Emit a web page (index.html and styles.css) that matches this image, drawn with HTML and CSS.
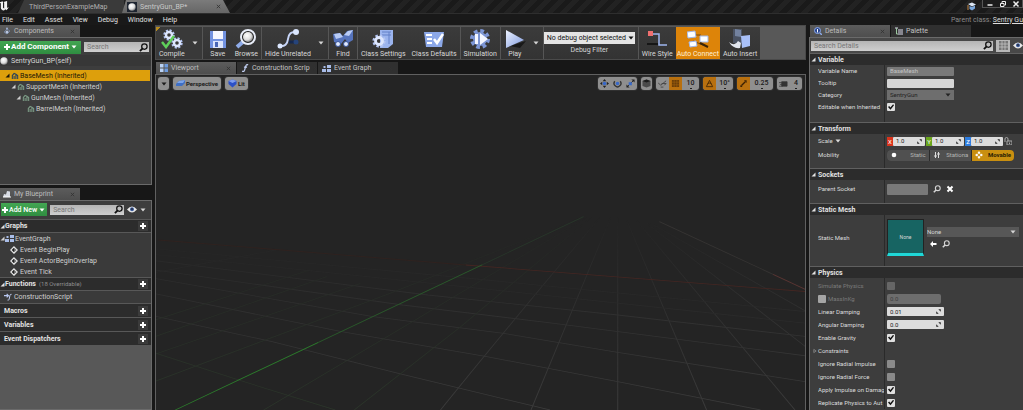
FILE: index.html
```html
<!DOCTYPE html>
<html lang="en">
<head>
<meta charset="utf-8">
<title>SentryGun_BP</title>
<link rel="stylesheet" href="styles.css">
</head>
<body>
<svg class="defs" aria-hidden="true">
  <defs>
    <linearGradient id="blue" x1="0" y1="0" x2="1" y2="1"><stop offset="0" stop-color="#eef3ff"/><stop offset="1" stop-color="#7f9be0"/></linearGradient>
    <radialGradient id="ball" cx=".4" cy=".35" r=".7"><stop offset="0" stop-color="#fff"/><stop offset=".6" stop-color="#ddd"/><stop offset="1" stop-color="#777"/></radialGradient>
    <symbol id="caret" viewBox="0 0 6 4"><path d="M.5.5h5L3 3.5z" fill="currentColor"/></symbol>
    <symbol id="open" viewBox="0 0 5 5"><path d="M4.5.5v4h-4z" fill="currentColor"/></symbol>
    <symbol id="plus" viewBox="0 0 8 8"><path d="M3 1h2v2h2v2H5v2H3V5H1V3h2z" fill="currentColor"/></symbol>
    <symbol id="close" viewBox="0 0 6 6"><path d="M1 1l4 4M5 1L1 5" stroke="currentColor" fill="none"/></symbol>
    <symbol id="lens" viewBox="0 0 10 10"><circle cx="6" cy="4" r="3" fill="none" stroke="currentColor" stroke-width="1.4"/><path d="M3.8 6.2L1 9" stroke="currentColor" stroke-width="2"/></symbol>
    <symbol id="eye" viewBox="0 0 12 8"><path d="M0 4Q6-3 12 4Q6 11 0 4z" fill="#e8e8e8"/><circle cx="6" cy="3.6" r="2.4" fill="#3d5c9c"/><circle cx="6" cy="3.4" r="1" fill="#111"/></symbol>
    <symbol id="sphere" viewBox="0 0 8 8"><circle cx="4" cy="4" r="3.7" fill="url(#ball)"/></symbol>
    <symbol id="mesh" viewBox="0 0 8 9"><path d="M1 8V4l2-2.500 2 1 2 1.500v4M3 8V4.500M5 8V3" fill="none" stroke="currentColor" stroke-width="1.200"/></symbol>
    <symbol id="event" viewBox="0 0 8 8"><path d="M4 .8L7.200 4 4 7.200.8 4z" fill="#222" stroke="#e4e4e4" stroke-width="1.200"/><path d="M4 .8L7.200 4 4 7.200z" fill="#e4e4e4" fill-opacity=".35"/></symbol>
    <symbol id="graph" viewBox="0 0 9 7"><path d="M0 4h4v3H0zM5 4h4v3H5zM5 0h4v3H5zM1.500 1h2v2h-2z" fill="#a9bde8"/></symbol>
    <symbol id="grid4" viewBox="0 0 8 8"><path d="M0 0h3.500v3.500H0zM0 4.500h3.500V8H0z" fill="#b9d2f5"/><path d="M4.500 0H8v3.500H4.500zM4.500 4.500H8V8H4.500z" fill="#6c9be0"/></symbol>
    <symbol id="fn" viewBox="0 0 8 9"><path d="M7.500 1Q5.500 0 4.800 2.500L3.500 7Q2.800 9 .8 8M2.800 3.500h3.500" fill="none" stroke="#c4d2f5" stroke-width="1.300"/></symbol>
    <symbol id="cscript" viewBox="0 0 9 9"><path d="M0 3h5M3 1l2 2-2 2" fill="none" stroke="#b9c8f0" stroke-width="1.300"/><path d="M8.500 1.500Q7 1 6.600 3L5.800 7Q5.400 8.500 4 8" fill="none" stroke="#c4d2f5" stroke-width="1.100"/></symbol>
    <symbol id="gear" viewBox="0 0 16 16"><circle cx="8" cy="8" r="6" fill="none" stroke="#b4c5f2" stroke-width="3.200" stroke-dasharray="2.700 2.012"/><circle cx="8" cy="8" r="4" fill="none" stroke="#dde6fd" stroke-width="3.200"/></symbol>
    <symbol id="spin" viewBox="0 0 6 6"><path d="M2.800.3h2.900v2.900zM.3 2.800v2.900h2.900z" fill="#222"/></symbol>
  </defs>
</svg>

<header class="titlebar">
  <svg class="logo" viewBox="0 0 12 12"><path d="M0 1.500Q2 .2 3.600.6V8L5 9V2L4 1.300 8.500 0V8.500L10.500 7Q9.800 9.700 7.500 11L6.500 10 4.800 11.500Q1 10.500 1 8V2.500L0 2.800z" fill="#f2f2f2"/></svg>
  <button class="doc"><span>ThirdPersonExampleMap</span></button>
  <button class="doc doc-on"><i class="tile"><svg><use href="#sphere"/></svg></i><span>SentryGun_BP*</span><svg class="x"><use href="#close"/></svg></button>
  <span class="spacer"></span>
  <svg class="cap" viewBox="0 0 9 9"><path d="M1 2l4-1.500L9 2.500 5 4.500z" fill="#dce7f5"/><path d="M2.500 4v3L5 8.500 8 6.500v-3L5 5z" fill="#79a7dd"/><path d="M1 3v5" stroke="#c58a4a"/></svg>
  <div class="wm">
    <button aria-label="Minimize"><svg viewBox="0 0 8 8"><path d="M1.500 5h5" stroke="#eee" stroke-width="1.500"/></svg></button>
    <button aria-label="Restore"><svg viewBox="0 0 8 8"><path d="M1.500 3.500h3.500v3H1.500zM3 3V1.500h3.500V5H5.500" stroke="#eee" fill="none"/></svg></button>
    <button aria-label="Close"><svg viewBox="0 0 8 8"><path d="M1.500 1.500l5 5M6.500 1.500l-5 5" stroke="#eee" stroke-width="1.500"/></svg></button>
  </div>
</header>

<nav class="menu">
  <button>File</button><button>Edit</button><button>Asset</button><button>View</button><button>Debug</button><button>Window</button><button>Help</button>
  <span class="parent">Parent class: <a href="#">Sentry Gu</a></span>
</nav>

<main>
  <div class="col left">
    <section class="dock comps">
      <div class="tabs"><button class="tab on"><svg class="i8" viewBox="0 0 8 8"><path d="M1 5l3-3 3 2-3 3z" fill="none" stroke="#6f7f9b"/><circle cx="4" cy="5" r="1.500" fill="#b9c6df"/><circle cx="4" cy="1.500" r="1" fill="#9fb0d2"/></svg><span>Components</span><svg class="x"><use href="#close"/></svg></button></div>
      <div class="panel">
        <div class="bar">
          <button class="green wide"><svg class="i8"><use href="#plus"/></svg>Add Component<svg class="car"><use href="#caret"/></svg></button>
          <label class="find"><input type="text" placeholder="Search" aria-label="Search components"><svg><use href="#lens"/></svg></label>
        </div>
        <div class="self"><svg class="i8"><use href="#sphere"/></svg>SentryGun_BP(self)</div>
        <ul class="tree">
          <li class="lv0 sel"><svg class="tw"><use href="#open"/></svg><svg class="i8 navy"><use href="#mesh"/></svg>BaseMesh (Inherited)</li>
          <li class="lv1"><svg class="tw"><use href="#open"/></svg><svg class="i8"><use href="#mesh"/></svg>SupportMesh (Inherited)</li>
          <li class="lv2"><svg class="tw"><use href="#open"/></svg><svg class="i8"><use href="#mesh"/></svg>GunMesh (Inherited)</li>
          <li class="lv3"><svg class="i8"><use href="#mesh"/></svg>BarrelMesh (Inherited)</li>
        </ul>
      </div>
    </section>
    <section class="dock myb">
      <div class="tabs"><button class="tab on"><svg class="i8" viewBox="0 0 8 8"><path d="M0 7l1-3 2 .5L4 1l3 .5V7z" fill="#d8dce4"/><path d="M0 7h8" stroke="#fff"/></svg><span>My Blueprint</span><svg class="x"><use href="#close"/></svg></button></div>
      <div class="panel">
        <div class="bar">
          <button class="green"><svg class="i8"><use href="#plus"/></svg>Add New<svg class="car"><use href="#caret"/></svg></button>
          <label class="find"><input type="text" placeholder="Search" aria-label="Search blueprint"><svg><use href="#lens"/></svg></label>
          <button class="view" aria-label="View options"><svg class="eye"><use href="#eye"/></svg><svg class="car"><use href="#caret"/></svg></button>
        </div>
        <h3><svg class="tw"><use href="#open"/></svg>Graphs<button aria-label="Add graph"><svg><use href="#plus"/></svg></button></h3>
        <ul class="list">
          <li><svg class="tw"><use href="#open"/></svg><svg class="gr"><use href="#graph"/></svg>EventGraph</li>
          <li class="ev"><svg class="i8"><use href="#event"/></svg>Event BeginPlay</li>
          <li class="ev"><svg class="i8"><use href="#event"/></svg>Event ActorBeginOverlap</li>
          <li class="ev"><svg class="i8"><use href="#event"/></svg>Event Tick</li>
        </ul>
        <h3><svg class="tw"><use href="#open"/></svg>Functions <small>(18 Overridable)</small><button aria-label="Add function"><svg><use href="#plus"/></svg></button></h3>
        <ul class="list"><li class="cs"><svg class="i8"><use href="#cscript"/></svg>ConstructionScript</li></ul>
        <h3 class="flat">Macros<button aria-label="Add macro"><svg><use href="#plus"/></svg></button></h3>
        <h3 class="flat">Variables<button aria-label="Add variable"><svg><use href="#plus"/></svg></button></h3>
        <h3 class="flat">Event Dispatchers<button aria-label="Add dispatcher"><svg><use href="#plus"/></svg></button></h3>
      </div>
    </section>
  </div>

  <div class="col center">
    <div class="toolbar">
      <div class="grp first">
        <button class="tool"><svg viewBox="0 0 22 20"><use href="#gear" x="2" y="0" width="12" height="12"/><use href="#gear" x="10" y="8" width="12" height="12"/><path d="M1 13l4 5 8-11" fill="none" stroke="#5fd05a" stroke-width="2.500"/></svg>Compile</button>
        <button class="drop" aria-label="Compile options"><svg class="car"><use href="#caret"/></svg></button>
      </div>
      <div class="grp save">
        <button class="tool"><svg viewBox="0 0 20 20"><path d="M2 2h16v17H2z" fill="#7292e0"/><path d="M5 2h10v8H5z" fill="#f5f7ff"/><path d="M5 12h10v7H5z" fill="#dbe4fb"/><path d="M7 13h3v5H7z" fill="#4866b5"/></svg>Save</button>
        <button class="tool"><svg viewBox="0 0 22 20"><path d="M9 12l-7 6" stroke="#8eabe8" stroke-width="4"/><circle cx="13" cy="8" r="7" fill="#222" stroke="#e8edf8" stroke-width="2"/><circle cx="13" cy="8" r="5" fill="url(#ball)"/></svg>Browse</button>
      </div>
      <div class="grp">
        <button class="tool"><svg viewBox="0 0 22 20"><path d="M3 17q7 1 8-7t8-7" fill="none" stroke="#c7d5f8" stroke-width="2"/><path d="M12 13h7" stroke="#16284e" stroke-width="3"/><g fill="#dbe7ff"><circle cx="3" cy="17" r="2.500"/><circle cx="19" cy="3" r="3"/></g><circle cx="19" cy="13" r="2.500" fill="#26447a"/></svg>Hide Unrelated</button>
        <button class="drop" aria-label="Hide options"><svg class="car"><use href="#caret"/></svg></button>
      </div>
      <div class="grp">
        <button class="tool"><svg viewBox="0 0 22 20"><path d="M1 5l7-1 3 3 4-5 6-1v10l-5 3-3-4-4 5-7-2z" fill="#5674bd"/><path d="M2 5l6-1 3 4-7 2zM12 6l4-4 5-1-4 6z" fill="#b8cbf5"/><circle cx="6" cy="15" r="2.500" fill="#dfe8fc" stroke="#37549b"/><circle cx="14" cy="15" r="2.500" fill="#dfe8fc" stroke="#37549b"/></svg>Find</button>
      </div>
      <div class="grp">
        <button class="tool"><svg viewBox="0 0 22 20"><path d="M8 1h13v14l-5 4H8z" fill="#9bb4ee"/><path d="M10 3h9M10 6h9M17 3v12" stroke="#6280c8"/><use href="#gear" x="0" y="5" width="14" height="14"/></svg>Class Settings</button>
        <button class="tool"><svg viewBox="0 0 22 20"><path d="M1 3h20l-2 15H3z" fill="#8ca8e8"/><path d="M3 6h6M4 10h5M4 14h5" stroke="#fff" stroke-width="2"/><path d="M11 10l3 4 6-9" fill="none" stroke="#fff" stroke-width="2.500"/></svg>Class Defaults</button>
      </div>
      <div class="grp">
        <button class="tool"><svg viewBox="0 0 22 20"><circle cx="11" cy="10" r="8" fill="none" stroke="#7d97d6" stroke-width="4" stroke-dasharray="3.600 2.683"/><circle cx="11" cy="10" r="7" fill="#7b94d2"/><path d="M6 5h3v10H6zM11 4l8 6-8 6z" fill="#f3f6ff"/></svg>Simulation</button>
      </div>
      <div class="grp">
        <button class="tool"><svg viewBox="0 0 22 20"><path d="M6 17l16-5-6 7z" fill="#191919"/><path d="M2 1l18 10L2 19z" fill="url(#blue)"/></svg>Play</button>
        <button class="drop" aria-label="Play options"><svg class="car"><use href="#caret"/></svg></button>
      </div>
      <div class="debug">
        <span class="pick"><select id="dbg"><option>No debug object selected</option></select><svg class="car"><use href="#caret"/></svg></span>
        <label for="dbg">Debug Filter</label>
      </div>
      <div class="grp ends">
        <button class="tool"><svg viewBox="0 0 22 20"><path d="M4 5h9v11h8" fill="none" stroke="#9fb6f0" stroke-width="1.500"/><path d="M1 15h11" stroke="#161616" stroke-width="2"/><path d="M2 2h5v5H2z" fill="#f07070"/></svg>Wire Style</button>
        <button class="tool hot"><svg viewBox="0 0 22 20"><path d="M8 6h6M6 12l10 4" stroke="#7a4a10"/><path d="M0 3l8-1 1 6-8 1zM13 7h8v6h-8zM2 13l7-1 1 5-7 1z" fill="#fff" stroke="#9fb6e8"/><path d="M13 14l8 4" stroke="#3a2408" stroke-width="2"/></svg>Auto Connect</button>
        <button class="tool"><svg viewBox="0 0 22 20"><path d="M4 0h9v14H4z" fill="#4a5262"/><path d="M6 0l6 1v7L6 7z" fill="#73829f"/><path d="M12 7l9-1v11l-8 2z" fill="#a8c0f8"/><path d="M0 13q6 5 9-1l3 2-1 5q-7 1-11-6z" fill="#e2e6ef"/></svg>Auto Insert</button>
      </div>
    </div>
    <div class="tabs mid">
      <button class="tab on"><svg class="i8"><use href="#grid4"/></svg><span>Viewport</span><svg class="x"><use href="#close"/></svg></button>
      <button class="tab"><svg class="i8"><use href="#fn"/></svg><span>Construction Scrip</span><svg class="x"><use href="#close"/></svg></button>
      <button class="tab"><svg class="gr"><use href="#graph"/></svg><span>Event Graph</span><svg class="x"><use href="#close"/></svg></button>
    </div>
    <div class="viewport">
      <svg class="scene" viewBox="0 0 651 335" preserveAspectRatio="xMidYMax slice" aria-hidden="true">
        <defs>
          <linearGradient id="fade" x1="0" y1="110" x2="0" y2="690" gradientUnits="userSpaceOnUse"><stop offset="0" stop-color="#fff" stop-opacity="0"/><stop offset=".35" stop-color="#fff" stop-opacity=".4"/><stop offset="1" stop-color="#fff"/></linearGradient>
          <mask id="m" maskUnits="userSpaceOnUse" x="0" y="100" width="1570" height="600"><rect x="0" y="100" width="1570" height="600" fill="url(#fade)"/></mask>
        </defs>
        <g transform="translate(-5 105) scale(.421 .3333)" fill="none" stroke-width="2.400">
          <g mask="url(#m)">
            <g stroke="#3b3b3b">
              <path d="M690 690Q850 440 1070 110M905 690L1095 110M1111 690V110M1322 690L1132 120M1532 690L1155 120M1560 503L1180 130M1560 395L1190 130"/>
              <path d="M0 405L290 485 590 580 950 690M0 338L455 455 800 530 1111 605 1450 690M0 293L530 410 840 460 1111 517 1560 606M0 268L600 375 960 430 1560 528M0 240L660 345 1111 405 1560 470"/>
            </g>
            <g stroke="#2d3a2c">
              <path d="M10 518L210 600 440 690M270 690L630 420 1040 110M485 690L740 438 1050 110M0 610L570 340 1030 110M0 528L500 310M0 475L420 290M0 425L380 270" opacity=".8"/>
            </g>
            <g stroke="#303030"><path d="M0 222L760 322 1560 430M0 205L800 300 1560 395M0 280L300 210"/></g>
          </g>
          <path d="M20 180L750 255" stroke="#30221f"/><path d="M750 255L1560 335" stroke="#452622"/>
          <path d="M1210 125L1480 283" stroke="#363433"/><path d="M1480 283L1560 330" stroke="#5a3533"/>
          <path d="M60 690L400 487" stroke="#2c7c2c"/><path d="M400 487L790 254" stroke="#2a582b"/><path d="M790 254L1030 110" stroke="#28362a"/>
        </g>
      </svg>
      <div class="hud">
        <button class="pill sq" aria-label="Viewport options"><svg class="car"><use href="#caret"/></svg></button>
        <button class="pill"><svg class="i9" viewBox="0 0 9 9"><path d="M0 5l3-3 6-1v3L6 7H0z" fill="#3f6fc4"/><path d="M1 4l2-2 6-1-2 3z" fill="#7ba4ea"/></svg>Perspective</button>
        <button class="pill"><svg class="i9" viewBox="0 0 9 9"><path d="M.5 2L4.500.5 8.500 2v3L4.500 8.500.5 5z" fill="#2b50c8"/><path d="M.5 2L4.500.5 8.500 2 4.500 4z" fill="#7d9cf0"/></svg>Lit</button>
        <span class="spacer"></span>
        <div class="pill multi">
          <button aria-label="Move"><svg viewBox="0 0 10 10"><path d="M5 0l2 2.500H3zM5 10l2-2.500H3zM0 5l2.500-2v4zM10 5L7.500 3v4z" fill="#222"/><circle cx="5" cy="5" r="2" fill="#3768c8"/></svg></button>
          <button aria-label="Rotate"><svg viewBox="0 0 10 10"><path d="M2 2.500A3.800 3.800 0 1 0 8 2.500" fill="none" stroke="#333" stroke-width="1.500"/><circle cx="5" cy="5" r="2" fill="#3768c8"/></svg></button>
          <button aria-label="Scale"><svg viewBox="0 0 10 10"><path d="M6 .5h3.500V4zM.5 6v3.500H4z" fill="#222"/><path d="M2 8l6-6" stroke="#222"/><path d="M3 3.500h3.500V7H3z" fill="#3768c8"/></svg></button>
        </div>
        <button class="pill sq" aria-label="World space"><svg class="i9" viewBox="0 0 9 9"><path d="M.5 2L4.500.5l4 1.500v5L4.500 8.500.5 7z" fill="#4a4a4a"/><path d="M.5 2L4.500 3.500 8.500 2 4.500.5z" fill="#1c1c1c"/></svg></button>
        <div class="pill multi">
          <button aria-label="Surface snapping"><svg viewBox="0 0 10 10"><path d="M0 4l3 3 6-5M4 5h5L7 7M3 9h3" fill="none" stroke="#444"/></svg></button>
          <button class="orange" aria-label="Grid snapping"><svg viewBox="0 0 10 10"><path d="M1 1h8v8H1z" fill="#6a3d08"/><path d="M1 3.500h8M1 6.500h8M3.500 1v8M6.500 1v8" stroke="#a3640f" stroke-width=".6"/></svg></button>
          <button class="num">10</button>
        </div>
        <div class="pill multi">
          <button class="orange" aria-label="Angle snapping"><svg viewBox="0 0 10 10"><path d="M1.500 8.500L5 1.500l3.500 7zM3 5q2-1 4 0" fill="none" stroke="#4a2a05"/></svg></button>
          <button class="num">10°</button>
        </div>
        <div class="pill multi">
          <button class="orange" aria-label="Scale snapping"><svg viewBox="0 0 10 10"><path d="M5.500 1.500H8.500V4.500z" fill="#3a2004"/><path d="M3 7l4-4" stroke="#3a2004" stroke-width="1.500"/><path d="M1.500 7h2v2h-2z" fill="#3a2004"/></svg></button>
          <button class="num w">0.25</button>
        </div>
        <div class="pill multi">
          <button aria-label="Camera speed"><svg viewBox="0 0 10 10"><path d="M3 3h6v5H3zM0 4h3M1 6h3M0 8h4" fill="#333" stroke="#333" stroke-width=".8"/></svg></button>
          <button class="num n">4</button>
        </div>
      </div>
    </div>
  </div>

  <div class="col right">
    <div class="tabs mid">
      <button class="tab on"><svg class="i8" viewBox="0 0 8 8"><circle cx="3.500" cy="3.500" r="3" fill="#29458c" stroke="#8ca9e8"/><path d="M3.500 2v3.500" stroke="#fff"/><path d="M6 6l2 2" stroke="#8ca9e8" stroke-width="1.500"/></svg><span>Details</span><svg class="x"><use href="#close"/></svg></button>
      <button class="tab"><svg class="i8" viewBox="0 0 8 8"><path d="M0 1h3M3 3h5M3 5h5M3 7h5" stroke="#dde"/><path d="M1.500 1v6H3" fill="none" stroke="#9cc7a0"/></svg><span>Palette</span><svg class="x"><use href="#close"/></svg></button>
    </div>
    <div class="details">
      <div class="bar">
        <label class="find"><input type="text" placeholder="Search Details" aria-label="Search details"><svg><use href="#lens"/></svg></label>
        <button class="matrix" aria-label="Property matrix"><svg viewBox="0 0 9 9"><path d="M0 0h9v9H0z" fill="#777"/><path d="M0 3h9M0 6h9M3 0v9M6 0v9" stroke="#ccc" stroke-width=".7"/></svg></button>
        <button class="view" aria-label="View options"><svg class="eye"><use href="#eye"/></svg></button>
      </div>

      <section class="cat">
        <h2><svg class="tw"><use href="#open"/></svg>Variable</h2>
        <div class="props var">
          <div class="row"><label for="vn">Variable Name</label><input id="vn" class="txt dim" type="text" value="BaseMesh"></div>
          <div class="row"><label for="tt">Tooltip</label><input id="tt" class="txt" type="text"></div>
          <div class="row"><label for="ct">Category</label><span class="pick cat-pick"><select id="ct"><option>SentryGun</option></select><svg class="car"><use href="#caret"/></svg></span></div>
          <div class="row"><label for="ed">Editable when Inherited</label><input id="ed" type="checkbox" checked></div>
        </div>
      </section>

      <section class="cat">
        <h2><svg class="tw"><use href="#open"/></svg>Transform</h2>
        <div class="props tra">
          <div class="row"><span class="lab">Scale <svg class="car"><use href="#caret"/></svg></span>
            <div class="xyz">
              <label class="ax r" for="sx">X</label><span class="spin"><input id="sx" type="text" value="1.0"><svg><use href="#spin"/></svg></span>
              <label class="ax g" for="sy">Y</label><span class="spin"><input id="sy" type="text" value="1.0"><svg><use href="#spin"/></svg></span>
              <label class="ax b" for="sz">Z</label><span class="spin"><input id="sz" type="text" value="1.0"><svg><use href="#spin"/></svg></span>
              <svg class="i8" viewBox="0 0 8 8"><path d="M3 4h5v4H3z" fill="none" stroke="#aaa"/><path d="M1 5V2q0-1.500 1.500-1.500T4 2v2" fill="none" stroke="#aaa"/><path d="M5.500 5.500v1.500" stroke="#aaa"/></svg>
            </div></div>
          <div class="row"><span class="lab">Mobility</span>
            <div class="mob">
              <button><svg class="i8" viewBox="0 0 8 8"><circle cx="4" cy="4" r="2.300" fill="#fff"/></svg><span>Static</span></button>
              <button><svg class="i8" viewBox="0 0 8 8"><path d="M2.500 1v6M5.500 1v6M1 5h3M4 3h3" stroke="#ddd" fill="none"/></svg><span>Stationa</span></button>
              <button class="on"><svg class="i8" viewBox="0 0 8 8"><path d="M4 0l1.500 2h-3zM4 8l1.500-2h-3zM0 4l2-1.500v3zM8 4L6 2.500v3z" fill="#fff"/><circle cx="4" cy="4" r="1.600" fill="none" stroke="#fff" stroke-width=".8"/></svg><span>Movable</span></button>
            </div></div>
        </div>
      </section>

      <section class="cat">
        <h2><svg class="tw"><use href="#open"/></svg>Sockets</h2>
        <div class="props soc">
          <div class="row"><label for="ps">Parent Socket</label><div class="val"><input id="ps" class="txt sock" type="text"><button aria-label="Browse sockets"><svg class="i8"><use href="#lens"/></svg></button><button aria-label="Clear socket"><svg class="i8" viewBox="0 0 8 8"><path d="M1.500 1.500l5 5M6.500 1.500l-5 5" stroke="#fff" stroke-width="2"/></svg></button></div></div>
        </div>
      </section>

      <section class="cat">
        <h2><svg class="tw"><use href="#open"/></svg>Static Mesh</h2>
        <div class="props sm">
          <div class="row"><label for="sm">Static Mesh</label>
            <div class="asset"><div class="thumb">None</div>
              <div class="asset-r"><span class="pick none"><select id="sm"><option>None</option></select><svg class="car"><use href="#caret"/></svg></span>
                <div class="val"><button aria-label="Use selected"><svg class="i8" viewBox="0 0 8 8"><path d="M1 4l3-3v2h3.500v2H4v2z" fill="#fff"/></svg></button><button aria-label="Find asset"><svg class="i8"><use href="#lens"/></svg></button></div>
              </div></div></div>
        </div>
      </section>

      <section class="cat">
        <h2><svg class="tw"><use href="#open"/></svg>Physics</h2>
        <div class="props phy">
          <div class="row off"><label for="p1">Simulate Physics</label><input id="p1" type="checkbox" disabled></div>
          <div class="row off"><span class="lab"><input id="p2" class="pale" type="checkbox"><label for="p2">MassInKg</label></span><input class="txt mass" type="text" value="0.0" aria-label="Mass" disabled></div>
          <div class="row"><label for="p3">Linear Damping</label><span class="spin long"><input id="p3" type="text" value="0.01"><svg><use href="#spin"/></svg></span></div>
          <div class="row"><label for="p4">Angular Damping</label><span class="spin long"><input id="p4" type="text" value="0.0"><svg><use href="#spin"/></svg></span></div>
          <div class="row"><label for="p5">Enable Gravity</label><input id="p5" type="checkbox" checked></div>
          <div class="row fold"><span class="lab"><svg viewBox="0 0 5 6"><path d="M1 1l3 2-3 2z" fill="none" stroke="#aaa" stroke-width=".7"/></svg>Constraints</span></div>
          <div class="row"><label for="p6">Ignore Radial Impulse</label><input id="p6" type="checkbox"></div>
          <div class="row"><label for="p7">Ignore Radial Force</label><input id="p7" type="checkbox"></div>
          <div class="row"><label for="p8">Apply Impulse on Damag</label><input id="p8" type="checkbox" checked></div>
          <div class="row"><label for="p9">Replicate Physics to Aut</label><input id="p9" type="checkbox" checked></div>
        </div>
      </section>
    </div>
  </div>
</main>
</body>
</html>
```

FILE: styles.css
```css
* { box-sizing: border-box; }
body {
  margin: 0;
  height: 100vh;
  overflow: hidden;
  display: flex;
  flex-direction: column;
  background: #171717;
  color: #d6d6d6;
  font: 7px/10px Roboto, sans-serif;
}
button, input, select {
  font: inherit;
  color: inherit;
  border: 0;
  padding: 0;
  margin: 0;
  background: none;
  border-radius: 0;
}
input, select { min-width: 0; appearance: none; outline: 0; }
button { display: inline-flex; align-items: center; white-space: nowrap; }
svg { display: block; flex: none; }
ul { list-style: none; margin: 0; padding: 0; }
h2, h3 { margin: 0; font-size: 7px; font-weight: 700; }
.defs { position: absolute; width: 0; height: 0; }
.spacer { flex: 1; }
.i8 { width: 8px; height: 8px; }
.i9 { width: 9px; height: 9px; }
.car { width: 6px; height: 4px; }
.tw { width: 5px; height: 5px; }
.x { width: 5px; height: 5px; color: #333; }
.gr { width: 9px; height: 7px; }

/* Title bar */
.titlebar {
  display: flex;
  flex: none;
  height: 14px;
  background: repeating-linear-gradient(135deg, #1a1a1a 0 5px, #222 5px 10px);
  border-bottom: 1px solid #2e2e2e;
}
.logo { width: 10px; height: 12px; margin-right: 8px; }
.doc {
  width: 106px;
  padding-left: 11px;
  background: #3a3a3a;
  color: #b0b0b0;
  clip-path: polygon(6px 0, 100% 0, 100% 100%, 0 100%);
}
.doc-on {
  width: 108px;
  padding: 0 9px 0 5px;
  gap: 3px;
  margin-left: -2px;
  background: linear-gradient(#7b7b7b, #666);
  color: #c8c8c8;
  clip-path: polygon(4px 0, 101px 0, 100% 100%, 0 100%);
}
.doc-on .x { margin-left: auto; }
.tile { background: #1d2430; padding: 1px; }
.tile svg { width: 8px; height: 8px; }
.cap { width: 9px; height: 9px; margin: 2px 6px 0 0; }
.wm { display: flex; height: 8px; background: #1b1b1b; border: 1px solid #555; border-top: 0; }
.wm button { width: 13px; justify-content: center; }
.wm svg { width: 8px; height: 8px; }

/* Menu */
.menu {
  display: flex;
  flex: none;
  align-items: center;
  height: 11px;
  padding-left: 2px;
  gap: 10px;
  background: #191919;
  color: #e0e0e0;
}
.parent { margin-left: auto; color: #8a8a8a; white-space: nowrap; }
.parent a { color: #ddd; }

main {
  flex: 1;
  min-height: 0;
  display: grid;
  grid-template-columns: 152px minmax(0, 1fr) 214px;
  gap: 3px;
}
.col { display: flex; flex-direction: column; min-width: 0; min-height: 0; }

/* Tabs */
.tabs { display: flex; flex: none; height: 12px; gap: 1px; }
.tab {
  width: 80px;
  height: 12px;
  padding: 0 5px 0 3px;
  gap: 3px;
  background: #303030;
  color: #c4c4c4;
  overflow: hidden;
}
.tab.on { background: linear-gradient(#5c5c5c, #4e4e4e); color: #bdbdbd; }
.tab .x { margin-left: auto; }
.mid { padding-left: 1px; }
.mid .tab { padding-left: 4px; }

/* Shared panel pieces */
.dock { display: flex; flex-direction: column; }
.comps { height: 160px; margin-bottom: 3px; }
.myb { flex: 1; min-height: 0; }
.panel { flex: 1; background: #3d3d3d; border: 1px solid #6a6a6a; border-left: 0; }
.bar { display: flex; align-items: center; gap: 3px; }
.comps .bar { height: 17px; padding: 1px 2px 0 0; }
.myb .bar { height: 18px; padding: 0 2px 1px 1px; }
.green {
  height: 13px;
  padding: 0 2px 0 0;
  background: linear-gradient(#43a653, #2f8d40);
  color: #fff;
  font-weight: 500;
}
.green .car { margin-left: 2px; }
.wide { font-size: 8px; font-weight: 700; padding: 0 4px 0 3px; }
.find { display: flex; align-items: center; flex: 1; min-width: 0; height: 10px; background: linear-gradient(#b5b5b5, #cfcfcf); color: #111; padding: 0 1px 0 3px; }
.find input { flex: 1; width: 0; color: #222; }
.find input::placeholder { color: #777; opacity: 1; }
.find svg { width: 9px; height: 9px; }
.view { gap: 3px; padding: 0 3px 0 0; }
.eye { width: 10px; height: 7px; }
.self { display: flex; align-items: center; gap: 3px; height: 11px; background: #373737; }
.tree { padding-top: 4px; }
.tree li { display: flex; align-items: center; height: 11px; gap: 1px; color: #cfcfcf; }
.tree .i8 { color: #7c9c86; }
.tree .navy { color: #26405e; }
.lv0 { padding-left: 5px; }
.lv1 { padding-left: 11px; }
.lv2 { padding-left: 16px; }
.lv3 { padding-left: 27px; }
.tree .sel { background: #dd9f0c; color: #1c1608; margin-right: 1px; }

/* My Blueprint */
.myb .panel { background: linear-gradient(#3d3d3d 142px, #585858 142px); }
.myb h3 {
  display: flex;
  align-items: center;
  height: 14px;
  background: #2c2c2c;
  border: 1px solid #585858;
  border-width: 1px 0;
  color: #e2e2e2;
  padding-right: 3px;
}
.myb h3.flat { padding-left: 4px; border-bottom-width: 0; }
.myb h3 small { font: 400 6px/10px Roboto, sans-serif; color: #8d8d8d; margin-left: 3px; }
.myb h3 button { margin-left: auto; width: 10px; height: 10px; justify-content: center; background: #3b3b3b; color: #fff; }
.myb h3 button svg { width: 8px; height: 8px; }
.list { background: #3a3a3a; }
.list li { display: flex; align-items: center; height: 11px; color: #d0d0d0; }
.list .gr { margin-right: 1px; }
.list .ev { padding-left: 10px; gap: 2px; }
.list .cs { height: 12px; padding-left: 4px; gap: 2px; }

/* Toolbar */
.toolbar { display: flex; flex: none; height: 35px; background: #585858; border: 1px solid #4a4a4a; padding-top: 1px; margin-bottom: 2px; }
.grp, .debug { display: flex; background: linear-gradient(#3b3b3b, #333); border-right: 1px solid #565656; }
.first { background: linear-gradient(135deg, #b58a1c 3px, #393939 3px); }
.save { padding-left: 1px; }
.tool { flex-direction: column; justify-content: flex-end; min-width: 28px; padding: 0 3px; color: #d8d8d8; }
.tool svg { width: 22px; height: 20px; }
.drop { width: 14px; justify-content: center; }
.tool.hot { background: #dd8409; padding: 0 1px; color: #fff0d8; }
.ends { border-right: 0; }
.debug { flex-direction: column; align-items: center; justify-content: center; padding: 0 3px 0 0; gap: 1px; }
.pick { display: flex; align-items: center; position: relative; }
.pick select { flex: 1; width: 100%; height: 100%; }
.pick .car { position: absolute; right: 3px; }
.debug .pick { width: 91px; height: 12px; background: #e4e4e4; color: #111; }
.debug select { padding-left: 3px; }
.debug .pick .car { right: 1px; }

/* Viewport */
.viewport { position: relative; flex: 1; min-height: 0; background: #242424; border: 1px solid #606060; border-bottom: 0; overflow: hidden; }
.scene { position: absolute; inset: 0; width: 100%; height: 100%; }
.hud { position: relative; display: flex; align-items: center; gap: 4px; padding: 2px 3px 0 2px; }
.pill { display: flex; align-items: center; height: 13px; padding: 0 3px; gap: 1px; border-radius: 3px; background: #8f8f8f; color: #1a1a1a; font-size: 6px; font-weight: 700; box-shadow: 0 0 0 1px #303030; }
.sq { width: 11px; padding: 0; justify-content: center; }
.multi { padding: 0; gap: 0; overflow: hidden; font-size: 7px; font-weight: 500; }
.multi button { width: 13px; height: 13px; justify-content: center; }
.multi svg { width: 9px; height: 9px; }
.multi .orange { background: #b8700f; }
.multi .num { width: 17px; flex-direction: column; line-height: 9px; }
.num::after { content: ""; width: 2px; height: 1px; background: #222; }
.multi .w { width: 23px; }
.multi .n { width: 12px; }

/* Details */
.details { flex: 1; min-height: 0; background: #3d3d3d; border: 1px solid #6a6a6a; border-width: 1px 0 0 1px; overflow: hidden; }
.details .bar { height: 15px; padding: 0 0 0 1px; background: #484848; }
.matrix { width: 14px; height: 12px; justify-content: center; background: #b8b8b8; }
.matrix svg { width: 9px; height: 9px; }
.details .view { width: 10px; padding: 0; }
.cat { border-top: 1px solid #606060; }
h2 { display: flex; align-items: center; gap: 2px; height: 11px; padding-left: 1px; background: #2c2c2c; color: #e2e2e2; }
.props { font-size: 6px; background: linear-gradient(#2a2a2a, #2a2a2a) 74px 0 / 1px 100% no-repeat; }
.var { padding-bottom: 9px; }
.tra { padding-bottom: 6px; }
.soc { padding-bottom: 5px; }
.sm { padding-bottom: 6px; }
.phy { padding-top: 1px; }
.row { display: grid; grid-template-columns: 66px minmax(0, 1fr); gap: 3px; align-items: center; height: 13px; padding-left: 8px; }
.var .row { height: 12px; }
.tra .row { height: 14px; }
.soc .row { height: 18px; }
.sm .row { height: 45px; }
.row > label, .lab { display: flex; align-items: center; gap: 2px; overflow: hidden; white-space: nowrap; color: #dcdcdc; }
.row.off > label, .off .lab { color: #7b7b7b; }
.fold { padding-left: 3px; grid-template-columns: 71px minmax(0, 1fr); }
.fold svg { width: 4px; height: 6px; }
.fold .lab { gap: 1px; }
.txt { width: 67px; height: 9px; padding: 0 3px; background: #d6d6d6; border-radius: 1px; }
.dim { background: #797979; color: #c4c4c4; }
.mass { width: 54px; height: 10px; background: #6d6d6d; color: #3f3f3f; border-radius: 2px; }
.sock { width: 41px; height: 11px; background: #797979; }
.cat-pick { width: 67px; height: 10px; background: #6e6e6e; color: #222; }
.cat-pick select { padding-left: 3px; }
.row input[type="checkbox"] { width: 8px; height: 8px; background: #8a8a8a; border-radius: 1px; display: grid; place-items: center; }
.row input[type="checkbox"]:disabled { background: #666; }
.row input.pale { background: #a5a5a5; }
.row input[type="checkbox"]:checked { background: #e0e0e0; }
.row input[type="checkbox"]:checked::before { content: ""; width: 6px; height: 6px; background: #111; clip-path: polygon(0 50%, 20% 35%, 40% 60%, 85% 5%, 100% 20%, 42% 95%); }
.xyz { display: flex; align-items: center; }
.ax { width: 6px; height: 9px; line-height: 9px; text-align: center; color: #fff; }
.r { background: #d8341c; }
.g { background: #6aa51e; }
.b { background: #2d7de0; }
.spin { display: flex; align-items: center; width: 32px; height: 9px; margin-right: 1px; padding: 0 3px; background: #dcdcdc; border-radius: 1px; color: #222; }
.spin input { flex: 1; width: 0; }
.spin svg { width: 5px; height: 5px; }
.long { width: 57px; }
.mob { display: flex; height: 11px; width: 127px; border-radius: 4px; overflow: hidden; background: #2c2c2c; gap: 1px; }
.mob button { flex: 1; justify-content: space-between; padding: 0 3px; background: #505050; color: #b4b4b4; }
.mob .on { background: #c98f10; color: #2a1d04; font-weight: 700; }
.val { display: flex; align-items: center; gap: 5px; }
.asset { display: flex; gap: 3px; align-items: center; }
.thumb { width: 37px; height: 37px; display: grid; place-items: center; background: #176462; border: 1px solid #222; border-bottom: 3px solid #1fd8d8; font-size: 5px; }
.asset-r { flex: 1; padding-right: 4px; display: grid; gap: 3px; }
.none { height: 10px; background: #575757; }
.asset-r .val { padding-left: 2px; }
```
